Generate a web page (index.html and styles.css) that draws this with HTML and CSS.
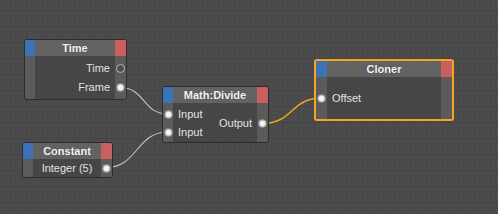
FILE: index.html
```html
<!DOCTYPE html>
<html>
<head>
<meta charset="utf-8">
<link rel="stylesheet" href="styles.css">
</head>
<body>
<div class="canvas">
  <svg class="wires" width="498" height="214" viewBox="0 0 498 214">
    <path class="wire" d="M119.5,87.5 C146,87.5 142,114 168,114"/>
    <path class="wire" d="M106,167.5 C138,167.5 136,132 168,132"/>
    <path class="wire orange" d="M262,123.5 C294,123.5 290,98 322,98"/>
  </svg>

  <div class="node n-time">
    <div class="head"><span class="cap blue"></span><span class="title">Time</span><span class="cap red"></span></div>
    <div class="body rows-time">
      <span class="label right">Time</span><span class="port out empty"></span>
      <span class="label right">Frame</span><span class="port out"></span>
    </div>
  </div>

  <div class="node n-math">
    <div class="head"><span class="cap blue"></span><span class="title">Math:Divide</span><span class="cap red"></span></div>
    <div class="body rows-math">
      <span class="port in r1"></span><span class="label left r1">Input</span>
      <span class="port in r2"></span><span class="label left r2">Input</span>
      <span class="label right outlabel">Output</span><span class="port out outport"></span>
    </div>
  </div>

  <div class="node n-cloner">
    <div class="head"><span class="cap blue"></span><span class="title">Cloner</span><span class="cap red"></span></div>
    <div class="body rows-cloner">
      <span class="port in"></span><span class="label left">Offset</span>
    </div>
  </div>

  <div class="node n-const">
    <div class="head"><span class="cap blue"></span><span class="title">Constant</span><span class="cap red"></span></div>
    <div class="body rows-const">
      <span class="label center">Integer (5)</span><span class="port out"></span>
    </div>
  </div>
</div>
</body>
</html>
```

FILE: styles.css
```css
* { box-sizing: border-box; }
html, body { margin: 0; padding: 0; }
body {
  width: 498px;
  height: 214px;
  overflow: hidden;
  font-family: "Liberation Sans", Arial, sans-serif;
  font-size: 11px;
}
.canvas {
  position: relative;
  width: 498px;
  height: 214px;
  background-color: #4b4b4b;
  background-image:
    linear-gradient(to right, #444444 1px, transparent 1px),
    linear-gradient(to bottom, #444444 1px, transparent 1px);
  background-size: 16px 16px;
  background-position: 10px 10px;
}
.wires { position: absolute; left: 0; top: 0; }
.wire { fill: none; stroke: #c4c4c4; stroke-width: 1.1; }
.wire.orange { stroke: #f2a21e; stroke-width: 1.5; }

.node {
  position: absolute;
  display: flex;
  flex-direction: column;
  border: 1px solid #2c2c2c;
  border-radius: 3px;
  overflow: hidden;
  background: #464646;
  --lw: 10px;
  --rw: 11px;
}
.n-time { left: 24px; top: 39px; width: 103px; height: 61px; }
.n-math { left: 162px; top: 86px; width: 107px; height: 57px; }
.n-cloner { left: 314px; top: 59px; width: 140px; height: 62px; border: 2px solid #f5a524; --lw: 11px; }
.n-const { left: 22px; top: 142px; width: 91px; height: 36px; }

.head {
  display: grid;
  grid-template-columns: var(--lw) 1fr var(--rw);
  height: 16px;
  flex: none;
  background: #626262;
}
.cap.blue { background: #3b73b6; }
.cap.red { background: #c95f5e; }
.title {
  text-align: center;
  line-height: 16px;
  font-weight: bold;
  color: #f4f4f4;
  text-shadow: 0 0 1px rgba(0,0,0,0.35);
}
.body {
  flex: 1;
  display: grid;
  grid-template-columns: var(--lw) 1fr var(--rw);
  background: linear-gradient(to right, #5b5b5b var(--lw), #464646 var(--lw), #464646 calc(100% - var(--rw)), #5b5b5b calc(100% - var(--rw)));
  color: #e2e2e2;
}
.label { line-height: 18px; white-space: nowrap; }
.label.right { grid-column: 2; text-align: right; padding-right: 5px; }
.label.left { grid-column: 2; padding-left: 5px; }
.label.center { grid-column: 2; text-align: center; }

.port {
  width: 9px;
  height: 9px;
  border-radius: 50%;
  align-self: center;
  justify-self: center;
  border: 1px solid #9a9a9a;
  background: radial-gradient(circle, #f4f4f4 0 2.3px, #bdbdbd 3.2px);
}
.port.empty {
  border: 1px solid #b4b4b4;
  background: #4c4c4c;
}
.port.out { grid-column: 3; }
.port.in { grid-column: 1; }

.rows-time { padding-top: 3px; grid-template-rows: 19px 19px; align-content: start; }
.rows-time .label { line-height: 19px; }

.rows-math { padding-top: 2px; grid-template-rows: 18px 18px; align-content: start; }
.rows-math .r1 { grid-row: 1; }
.rows-math .r2 { grid-row: 2; }
.rows-math .outlabel { grid-row: 1 / 3; align-self: center; }
.rows-math .outport { grid-row: 1 / 3; }

.rows-cloner { align-content: center; grid-template-rows: 18px; }
.rows-const { grid-template-rows: 18px; align-content: center; }
```
